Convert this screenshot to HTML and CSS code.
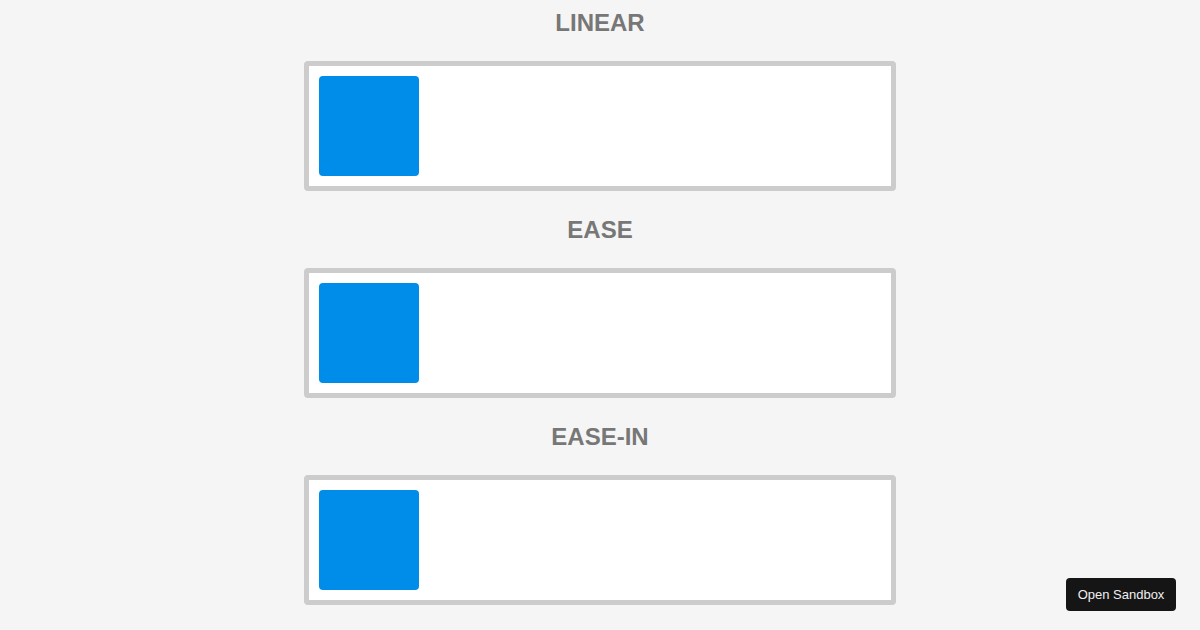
FILE: index.html
```html
<!DOCTYPE html>
<html lang="en">
<head>
    <meta charset="UTF-8">
    <meta name="viewport" content="width=device-width, initial-scale=1.0">
    <title>Timing Functions</title>
    <link rel="stylesheet" href="styles.css">
</head>
<body>
    <div class="container">
        <section class="demo">
            <h2>LINEAR</h2>
            <div class="track">
                <div class="box"></div>
            </div>
        </section>
        <section class="demo">
            <h2>EASE</h2>
            <div class="track">
                <div class="box"></div>
            </div>
        </section>
        <section class="demo">
            <h2>EASE-IN</h2>
            <div class="track">
                <div class="box"></div>
            </div>
        </section>
    </div>

    <a class="sandbox-button" href="#">Open Sandbox</a>
</body>
</html>
```

FILE: styles.css
```css
body {
    margin: 0;
    padding: 0;
    font-family: 'Liberation Sans', Arial, sans-serif;
    background-color: #f5f5f5;
    height: 100vh;
    overflow: hidden;
}

.container {
    display: flex;
    flex-direction: column;
    align-items: center;
    padding-top: 9px;
}

.demo {
    margin-bottom: 25px;
}

h2 {
    margin: 0 0 24px;
    font-size: 24px;
    line-height: 28px;
    text-align: center;
    color: #777;
    font-weight: bold;
}

.track {
    box-sizing: border-box;
    width: 592px;
    padding: 10px;
    background-color: #fff;
    border: 5px solid #ccc;
    border-radius: 4px;
}

.box {
    width: 100px;
    height: 100px;
    background-color: #008ce9;
    border-radius: 4px;
}

.sandbox-button {
    position: fixed;
    right: 24px;
    bottom: 19px;
    box-sizing: border-box;
    width: 110px;
    height: 33px;
    display: flex;
    align-items: center;
    justify-content: center;
    background-color: #151515;
    color: #f0f0f0;
    font-size: 13px;
    text-decoration: none;
    border-radius: 4px;
}
```
